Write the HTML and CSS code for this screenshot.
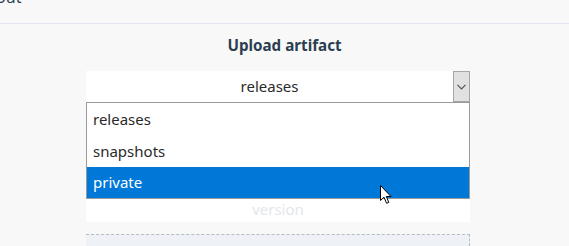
FILE: index.html
```html
<!DOCTYPE html>
<html>
<head>
<meta charset="utf-8">
<link rel="stylesheet" href="styles.css">
</head>
<body>
<div class="topbar"><span class="topbar-text">About</span></div>
<div class="main">
  <h2 class="title">Upload artifact</h2>
  <div class="form">
    <div class="select">
      <div class="select-value">releases</div>
      <div class="select-btn">
        <svg width="9" height="6" viewBox="0 0 9 6"><path d="M0.5 0.8 L4.5 4.8 L8.5 0.8" fill="none" stroke="#555" stroke-width="1.2"/></svg>
      </div>
    </div>
    <div class="list">
      <div class="option">releases</div>
      <div class="option">snapshots</div>
      <div class="option selected">private</div>
    </div>
    <div class="input-rest">version</div>
    <div class="dropzone"></div>
  </div>
</div>
<svg class="cursor" width="13" height="20" viewBox="0 0 13 20">
  <path d="M0.5 0.5 L0.5 15.5 L4 12.2 L6.6 18.3 L8.8 17.4 L6.3 11.5 L11 11.5 Z" fill="#fff" stroke="#000" stroke-width="1" stroke-linejoin="miter"/>
</svg>
</body>
</html>
```
FILE: styles.css
```css
html, body {
  margin: 0;
  padding: 0;
  background: #f8f8f8;
  height: 100%;
  overflow: hidden;
  font-family: "Noto Sans", "Open Sans", sans-serif;
}
.topbar {
  height: 23px;
  border-bottom: 1px solid #e4e4ee;
  overflow: hidden;
}
.topbar-text {
  display: block;
  margin-top: -11px;
  margin-left: -24px;
  font-size: 16px;
  line-height: 16px;
  color: #2c3e50;
}
.main {
  padding-top: 10px;
}
.title {
  margin: 0;
  text-align: center;
  font-size: 15.2px;
  font-weight: 700;
  color: #2c3e50;
  line-height: 22px;
}
.form {
  width: 384px;
  margin: 15px 0 0 86px;
}
.select {
  display: flex;
  height: 31px;
  background: #fff;
}
.select-value {
  flex: 1;
  text-align: center;
  font-size: 15px;
  line-height: 31px;
  color: #2a2a2a;
}
.select-btn {
  width: 15px;
  border: 1px solid #a6a6a6;
  background: #e1e1e1;
  display: flex;
  align-items: center;
  justify-content: center;
}
.list {
  border: 1px solid #9a9a9a;
  border-bottom: none;
  background: #fff;
}
.option {
  height: 32px;
  line-height: 32px;
  padding-left: 6px;
  font-size: 15px;
  color: #2a2a2a;
}
.option.selected {
  background: #0078d7;
  color: #fff;
  border-bottom: 1px solid #9a9a9a;
  height: 31px;
  line-height: 31px;
}
.input-rest {
  height: 23px;
  background: #fff;
  text-align: center;
  font-size: 15px;
  line-height: 21px;
  color: #e3e6ec;
}
.dropzone {
  margin-top: 12px;
  height: 11px;
  border-top: 1px dashed #b5bcc6;
  border-right: 1px dashed #b5bcc6;
  background: #eef2f6;
}
.cursor {
  position: absolute;
  left: 380px;
  top: 185px;
}
```
